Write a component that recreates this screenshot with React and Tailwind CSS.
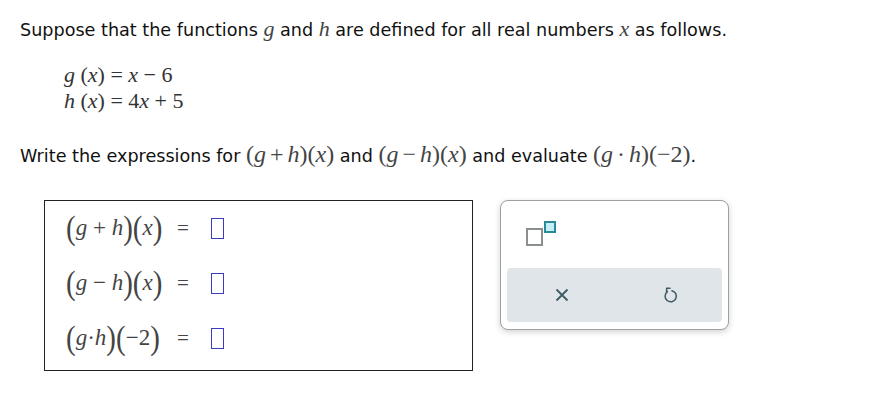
import React from "react";

const V = ({ children }) => <i className="font-['Liberation_Serif',serif] italic">{children}</i>;
const Op = ({ children }) => <span className="font-['Liberation_Serif',serif] mx-[4px]">{children}</span>;

function BigParen({ c }) {
  return (
    <span className="inline-block font-['Liberation_Serif',serif] text-[29px] leading-none scale-y-[1.15] text-[#444] align-[-2px]">{c}</span>
  );
}

function Row({ children }) {
  return (
    <div className="flex items-center h-[58px] pl-[21px]">
      <div className="w-[111px] flex items-center font-['Liberation_Serif',serif] text-[23px] text-[#444] whitespace-pre">{children}</div>
      <span className="font-['Liberation_Serif',serif] text-[21px] text-[#444] w-[34px]">=</span>
      <span className="inline-block w-[13px] h-[21px] border-[1.5px] border-[#3a3ac4]"></span>
    </div>
  );
}

export default function App() {
  return (
    <div className="w-[878px] h-[408px] bg-white font-['DejaVu_Sans',sans-serif] text-[17.6px] text-[#111] overflow-hidden">
      <p className="pt-[17px] pl-[20px] leading-[24px]">
        Suppose that the functions <span className="text-[22px] text-[#444]"><V>g</V></span> and <span className="text-[22px] text-[#444]"><V>h</V></span> are defined for all real numbers <span className="text-[22px] text-[#444]"><V>x</V></span> as follows.
      </p>
      <div className="pl-[64px] pt-[20px] font-['Liberation_Serif',serif] text-[22px] leading-[26px] text-[#333]">
        <div><V>g</V> (<V>x</V>) = <V>x</V> − 6</div>
        <div><V>h</V> (<V>x</V>) = 4<V>x</V> + 5</div>
      </div>
      <p className="pl-[20px] pt-[26px] leading-[28px]">
        Write the expressions for{" "}
        <span className="text-[24px] text-[#444] font-['Liberation_Serif',serif]">(<V>g</V><Op>+</Op><V>h</V>)(<V>x</V>)</span> and{" "}
        <span className="text-[24px] text-[#444] font-['Liberation_Serif',serif]">(<V>g</V><Op>−</Op><V>h</V>)(<V>x</V>)</span> and evaluate{" "}
        <span className="text-[24px] text-[#444] font-['Liberation_Serif',serif]">(<V>g</V><Op>·</Op><V>h</V>)(−2)</span>.
      </p>
      <div className="flex items-start pt-[30px] pl-[44px] gap-[27px]">
        <div className="w-[429px] h-[171px] border border-[#222] flex flex-col justify-center pb-[4px]">
          <Row>
            <BigParen c="(" /><V>g</V> + <V>h</V><BigParen c=")" /><BigParen c="(" /><V>x</V><BigParen c=")" />
          </Row>
          <Row>
            <BigParen c="(" /><V>g</V> − <V>h</V><BigParen c=")" /><BigParen c="(" /><V>x</V><BigParen c=")" />
          </Row>
          <Row>
            <BigParen c="(" /><V>g</V>·<V>h</V><BigParen c=")" /><BigParen c="(" /><span>−2</span><BigParen c=")" />
          </Row>
        </div>
        <div className="w-[229px] h-[130px] border border-[#9aa0a3] rounded-[8px] shadow-[0_2px_6px_rgba(0,0,0,0.18)] bg-white flex flex-col">
          <div className="h-[67px] pl-[24px] pt-[20px]">
            <svg width="32" height="26" viewBox="0 0 32 26">
              <rect x="2" y="8" width="15" height="16" fill="white" stroke="#8a8f90" strokeWidth="2" />
              <rect x="20" y="1" width="10" height="10" fill="#c6eef7" stroke="#2b8a9a" strokeWidth="2" />
            </svg>
          </div>
          <div className="mx-[6px] h-[54px] rounded-[4px] bg-[#dfe5e8] flex items-center justify-around px-[8px]">
            <svg width="16" height="16" viewBox="0 0 16 16" className="ml-[4px]">
              <path d="M2.5 2.5 L13.5 13.5 M13.5 2.5 L2.5 13.5" stroke="#3e5a63" strokeWidth="1.8" fill="none" />
            </svg>
            <svg width="18" height="18" viewBox="0 0 24 24" className="ml-[20px]">
              <path d="M8.5 7.5 A7.5 7.5 0 1 0 14.5 6.2" stroke="#3e5a63" strokeWidth="2" fill="none" strokeLinecap="round" />
              <path d="M12 3 H7.5 V7.5" stroke="#3e5a63" strokeWidth="2" fill="none" strokeLinecap="round" strokeLinejoin="round" />
            </svg>
          </div>
        </div>
      </div>
    </div>
  );
}
